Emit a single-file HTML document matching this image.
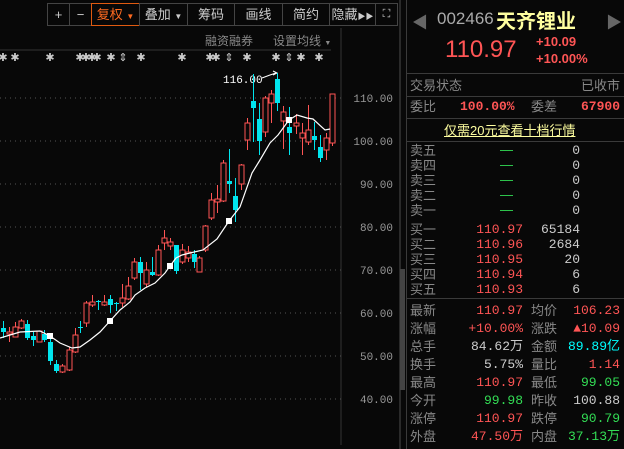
<!DOCTYPE html>
<html><head><meta charset="utf-8"><style>
*{margin:0;padding:0;box-sizing:border-box}
body{width:624px;height:449px;background:#080808;overflow:hidden;position:relative;font-family:"Liberation Sans","Noto Sans CJK SC",sans-serif;color:#aaa}
.a{position:absolute;white-space:nowrap}
.btn{position:absolute;top:3px;height:23px;border:1px solid #444;color:#ccc;font-size:13px;line-height:21px;text-align:center}
.r{color:#ff5555}.g{color:#33dd55}.c{color:#00ffff}.w{color:#ccc}.l{color:#888}
.row{position:absolute;left:410px;width:210px;font-size:13px;height:18px;line-height:18px}
.mono{font-family:"Liberation Mono","DejaVu Sans Mono",monospace}
.hl{position:absolute;left:406px;width:218px;height:1px;background:#3a3a3a}
</style></head><body>
<div class="btn" style="left:47px;width:23px">+</div>
<div class="btn" style="left:69px;width:23px">−</div>
<div class="btn" style="left:91px;width:49px;border-color:#e05a10;color:#ff6a20">复权 <span style="font-size:8px">▼</span></div>
<div class="btn" style="left:139px;width:49px">叠加 <span style="font-size:8px">▼</span></div>
<div class="btn" style="left:187px;width:48px">筹码</div>
<div class="btn" style="left:234px;width:49px">画线</div>
<div class="btn" style="left:282px;width:48px">简约</div>
<div class="btn" style="left:329px;width:47px">隐藏<span style="font-size:8px">▶▶</span></div>
<div class="btn" style="left:375px;width:23px;font-size:11px">⛶</div>
<div class="a l" style="left:205px;top:32px;font-size:12px">融资融券</div>
<div class="a l" style="left:273px;top:32px;font-size:12px">设置均线 <span style="font-size:7px">▼</span></div>
<svg class="a" style="left:0;top:0" width="406" height="449">
<line x1="0" y1="50" x2="331" y2="50" stroke="#333"/>
<line x1="341" y1="28" x2="341" y2="445" stroke="#333"/>
<line x1="400" y1="0" x2="400" y2="449" stroke="#2a2a2a" stroke-width="2"/>
<rect x="400" y="269" width="5" height="121" fill="#444"/>
<g stroke="#555" stroke-dasharray="1,4">
<line x1="0" y1="98" x2="341" y2="98"/><line x1="0" y1="141" x2="341" y2="141"/><line x1="0" y1="184" x2="341" y2="184"/><line x1="0" y1="227" x2="341" y2="227"/><line x1="0" y1="270" x2="341" y2="270"/><line x1="0" y1="313" x2="341" y2="313"/><line x1="0" y1="356" x2="341" y2="356"/><line x1="0" y1="399" x2="341" y2="399"/>
</g>
<g fill="#999" font-family="Liberation Mono,monospace" font-size="11" text-anchor="end">
<text x="393" y="102">110.00</text><text x="393" y="145">100.00</text><text x="393" y="188">90.00</text><text x="393" y="231">80.00</text><text x="393" y="274">70.00</text><text x="393" y="317">60.00</text><text x="393" y="360">50.00</text><text x="393" y="403">40.00</text>
</g>
<g fill="#ccc" font-size="11" text-anchor="middle">
<text x="3" y="61">✱</text><text x="15" y="61">✱</text><text x="50" y="61">✱</text><text x="80" y="61">✱</text><text x="86" y="61">✱</text><text x="92" y="61">✱</text><text x="97" y="61">✱</text><text x="111" y="61">✱</text><text x="123" y="61">⇕</text><text x="141" y="61">✱</text><text x="182" y="61">✱</text><text x="210" y="61">✱</text><text x="216" y="61">✱</text><text x="229" y="61">⇕</text><text x="247" y="61">✱</text><text x="276" y="61">✱</text><text x="289" y="61">⇕</text><text x="301" y="61">✱</text><text x="319" y="61">✱</text>
</g>
<text x="223" y="83" fill="#fff" font-family="Liberation Mono,monospace" font-size="11">116.00</text>
<path d="M262 78 L270 75 L276 73" stroke="#fff" fill="none"/><path d="M273 71 L277 73 L273 75" stroke="#fff" fill="none"/>
<g id="k"></g>
<polyline fill="none" stroke="#fff" stroke-width="1.2" points="0,338 20,332 40,331 50,336 60,343 72,348 80,347 90,340 100,332 110,321 120,310 130,302 135,295 145,288 155,283 165,273 170,266 176,258 182,255 190,253 203,250 217,239 229,221 240,207 252,173 260,160 270,143 278,135 289,120 297,115 307,118 313,119 325,130 330,129"/>
<rect x="47" y="333" width="6" height="6" fill="#fff"/><rect x="107" y="318" width="6" height="6" fill="#fff"/><rect x="167" y="263" width="6" height="6" fill="#fff"/><rect x="226" y="218" width="6" height="6" fill="#fff"/><rect x="286" y="117" width="6" height="6" fill="#fff"/>
</svg>
<script>
var d=[[3,'c',328,332,321,338],[9,'r',332,334,327,342],[15,'r',327,337,322,337],[21,'r',321,328,319,329],[27,'c',324,338,320,340],[33,'c',336,340,332,346],[39,'r',331,342,331,342],[44,'c',334,340,330,342],[50,'c',342,361,337,365],[56,'c',364,371,360,373],[62,'r',366,372,364,373],[69,'r',350,370,347,371],[75,'r',335,352,328,353],[80,'c',327,328,321,333],[86,'r',303,323,301,327],[92,'r',302,305,295,307],[98,'c',301,302,300,310],[104,'r',302,305,295,306],[110,'c',299,305,295,313],[116,'c',303,304,302,311],[122,'r',298,303,284,307],[128,'r',286,299,277,300],[134,'r',262,278,258,280],[140,'c',262,273,257,290],[146,'r',270,284,262,287],[152,'c',272,275,257,276],[158,'r',250,275,245,276],[164,'r',238,243,230,250],[170,'r',242,246,238,250],[176,'c',245,271,245,274],[182,'r',250,262,244,264],[188,'r',252,258,246,262],[194,'c',254,262,250,268],[199,'r',258,272,256,272],[205,'r',226,250,225,252],[211,'r',200,218,193,220],[217,'r',199,202,185,213],[223,'r',163,201,160,202],[229,'c',181,184,149,193],[235,'c',196,210,178,222],[241,'r',165,184,164,190],[247,'r',123,140,118,150],[253,'c',101,108,74,142],[259,'c',119,141,103,155],[265,'r',98,132,96,137],[271,'r',94,103,90,123],[277,'c',79,103,73,111],[283,'r',112,121,106,149],[289,'c',127,133,107,155],[296,'r',123,126,114,134],[302,'r',133,138,123,155],[308,'r',130,142,105,145],[314,'c',136,140,122,150],[320,'c',147,158,135,162],[326,'r',138,150,133,160],[332,'r',94,143,94,146]];
var s='';d.forEach(function(k){var col=k[1]=='r'?'#ff5555':'#00e5ee';s+='<line x1="'+(k[0]+.5)+'" y1="'+k[4]+'" x2="'+(k[0]+.5)+'" y2="'+k[5]+'" stroke="'+col+'"/>';if(k[1]=='r')s+='<rect x="'+(k[0]-2)+'" y="'+k[2]+'" width="5" height="'+Math.max(1,k[3]-k[2])+'" fill="#080808" stroke="'+col+'"/>';else s+='<rect x="'+(k[0]-2)+'" y="'+k[2]+'" width="5" height="'+Math.max(1,k[3]-k[2])+'" fill="'+col+'"/>';});
document.getElementById('k').innerHTML=s;
</script>
<div class="a" style="left:406px;top:0;width:1px;height:449px;background:#3a3a3a"></div>
<div class="a" style="left:412px;top:9px;font-size:16px;color:#666">◀</div>
<div class="a" style="left:606px;top:9px;font-size:16px;color:#666">▶</div>
<div class="a" style="left:437px;top:9px;font-size:17px;color:#aaa">002466</div>
<div class="a" style="left:496px;top:5px;font-size:20px;color:#ffffa0;font-weight:bold">天齐锂业</div>
<div class="a r" style="left:445px;top:36px;font-size:24px">110.97</div>
<div class="a r" style="left:536px;top:34px;font-size:13px;font-weight:bold">+10.09</div>
<div class="a r" style="left:536px;top:51px;font-size:13px;font-weight:bold">+10.00%</div>
<div class="hl" style="top:73px"></div>
<div class="row" style="top:77px"><span class="l">交易状态</span><span class="a l" style="right:0;top:0">已收市</span></div>
<div class="hl" style="top:96px"></div>
<div class="row" style="top:98px"><span class="l">委比</span><span class="a r mono" style="left:50px;top:0;font-weight:bold">100.00%</span><span class="a l" style="left:121px;top:0">委差</span><span class="a r mono" style="right:0;top:0;font-weight:bold">67900</span></div>
<div class="hl" style="top:118px"></div>
<div class="a" style="left:444px;top:120px;font-size:13px;color:#ffffa0;text-decoration:underline">仅需20元查看十档行情</div>
<div class="hl" style="top:141px"></div>
<div id="ob"></div>
<div class="hl" style="top:298px"></div>
<div id="st"></div>
<script>
var h='',sell=['卖五','卖四','卖三','卖二','卖一'];
sell.forEach(function(n,i){var t=143+i*15;h+='<div class="row" style="top:'+t+'px;height:15px;line-height:15px"><span class="l">'+n+'</span><span class="a g" style="left:90px;top:-1px">—</span><span class="a w mono" style="right:40px;top:0">0</span></div>';});
var buy=[['买一','110.97','65184'],['买二','110.96','2684'],['买三','110.95','20'],['买四','110.94','6'],['买五','110.93','6']];
buy.forEach(function(b,i){var t=222+i*15;h+='<div class="row" style="top:'+t+'px;height:15px;line-height:15px"><span class="l">'+b[0]+'</span><span class="a r mono" style="right:97px;top:0">'+b[1]+'</span><span class="a w mono" style="right:40px;top:0">'+b[2]+'</span></div>';});
document.getElementById('ob').innerHTML=h;
var st=[['最新','110.97','r','均价','106.23','r'],['涨幅','+10.00%','r','涨跌','▲10.09','r'],['总手','84.62万','w','金额','89.89亿','c'],['换手','5.75%','w','量比','1.14','r'],['最高','110.97','r','最低','99.05','g'],['今开','99.98','g','昨收','100.88','w'],['涨停','110.97','r','跌停','90.79','g'],['外盘','47.50万','r','内盘','37.13万','g']];
h='';st.forEach(function(s,i){var t=302+i*18;h+='<div class="row" style="top:'+t+'px"><span class="l">'+s[0]+'</span><span class="a mono '+s[2]+'" style="right:97px;top:0">'+s[1]+'</span><span class="a l" style="left:121px;top:0">'+s[3]+'</span><span class="a mono '+s[5]+'" style="right:0;top:0">'+s[4]+'</span></div>';});
document.getElementById('st').innerHTML=h;
</script>
</body></html>
